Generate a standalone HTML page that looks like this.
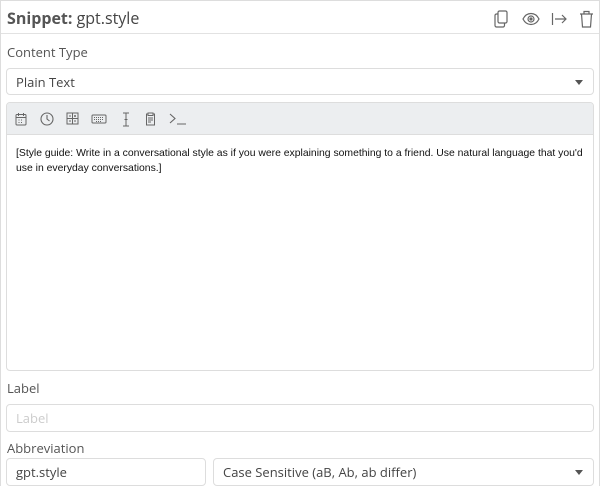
<!DOCTYPE html>
<html><head><style>
*{box-sizing:border-box;margin:0;padding:0}
body{width:600px;height:486px;background:#fff;font-family:"Open Sans","Liberation Sans",sans-serif;color:#444;position:relative;overflow:hidden}
.frame{position:absolute;left:0;top:0;width:600px;height:486px;border:1px solid #ddd;border-bottom:none}
.hdr{position:absolute;left:1px;top:1px;width:598px;height:33px;border-bottom:1px solid #e2e2e2}
.hdr .t{position:absolute;left:6px;top:6px;font-size:16px;color:#444}
.hdr b{font-weight:bold;color:#555}
.lbl{position:absolute;left:7px;font-size:13px;color:#555}
.box{position:absolute;border:1px solid #ddd;border-radius:4px;background:#fff;font-size:13px;color:#444;padding-left:9px;display:flex;align-items:center}
.caret{position:absolute;right:10px;top:50%;margin-top:-2px;border-left:4px solid transparent;border-right:4px solid transparent;border-top:5px solid #555}
.ed{position:absolute;left:6px;top:102px;width:588px;height:269px;border:1px solid #ddd;border-radius:4px;overflow:hidden}
.tb{height:32px;background:#eceef0;border-bottom:1px solid #ddd;position:relative}
.tb svg{position:absolute;top:9px}
.txt{padding:11px 9px;font-family:"Liberation Sans",Arial,sans-serif;font-size:10.4px;line-height:15px;color:#111;white-space:nowrap}
.ic{position:absolute;top:9px}
</style></head><body>
<div class="frame"></div>
<div class="hdr"><div class="t"><b>Snippet:</b> gpt.style</div>
<svg class="ic" style="left:492px" width="16" height="18" viewBox="0 0 16 18" fill="none" stroke="#666" stroke-width="1.2"><rect x="5" y="1" width="9" height="12" rx="1.5"/><path d="M5 4H3.5A1.5 1.5 0 0 0 2 5.5v10A1.5 1.5 0 0 0 3.5 17H10a1.5 1.5 0 0 0 1.5-1.5V13"/></svg>
<svg class="ic" style="left:521px;top:11px" width="18" height="14" viewBox="0 0 18 14" fill="none" stroke="#666" stroke-width="1.2"><path d="M1 7C3 3 6 1.5 9 1.5S15 3 17 7c-2 4-5 5.5-8 5.5S3 11 1 7z"/><circle cx="9" cy="7" r="3"/><circle cx="9" cy="7" r="1" fill="#666"/></svg>
<svg class="ic" style="left:550px;top:11px" width="17" height="14" viewBox="0 0 17 14" fill="none" stroke="#666" stroke-width="1.2"><path d="M1.5 1v12M4 7h11M11 3l4 4-4 4"/></svg>
<svg class="ic" style="left:578px" width="15" height="18" viewBox="0 0 15 18" fill="none" stroke="#666" stroke-width="1.2"><path d="M1 4h13M5 4V1.5h5V4M2.5 4l1 13h8l1-13"/></svg>
</div>
<div class="lbl" style="top:43px">Content Type</div>
<div class="box" style="left:6px;top:68px;width:588px;height:27px">Plain Text<span class="caret"></span></div>
<div class="ed"><div class="tb">
<svg style="left:8px" width="12" height="14" viewBox="0 0 12 14" fill="none" stroke="#666" stroke-width="1"><rect x="1" y="2.5" width="10" height="10.5" rx="1"/><path d="M1 5.5h10M3.5 1v3M8.5 1v3M3.5 8h1M6 8h1M8.5 8h0M3.5 10.5h1M6 10.5h1"/></svg>
<svg style="left:33px" width="14" height="14" viewBox="0 0 14 14" fill="none" stroke="#666" stroke-width="1.1"><circle cx="7" cy="7" r="6"/><path d="M7 3v4l2.5 2"/></svg>
<svg style="left:59px" width="13" height="13" viewBox="0 0 13 13" fill="none" stroke="#666" stroke-width="1"><rect x="1" y="1" width="11" height="11"/><path d="M6.5 1v11M1 6.5h11M3 4h2M8 4h2M9 3v2M3 9h2M8 9h2"/></svg>
<svg style="left:84px;top:11px" width="16" height="10" viewBox="0 0 16 10" fill="none" stroke="#666" stroke-width="1"><rect x="1" y="1" width="14" height="8" rx="1"/><path d="M3 3.5h10M3 5.5h10M5 7.5h6" stroke-dasharray="1 1"/></svg>
<svg style="left:115px" width="8" height="15" viewBox="0 0 8 15" fill="none" stroke="#666" stroke-width="1"><path d="M1 1h6M1 14h6M4 1v13M2.5 7.5h3"/></svg>
<svg style="left:138px" width="11" height="14" viewBox="0 0 11 14" fill="none" stroke="#666" stroke-width="1"><path d="M3 2H1.5v11h8V2H8M3 1h5v2.5H3zM3 6h5M3 8h5M3 10h3"/></svg>
<svg style="left:162px;top:10px" width="18" height="12" viewBox="0 0 18 12" fill="none" stroke="#666" stroke-width="1.1"><path d="M1 1l5 4.5L1 10M8 11h9"/></svg>
</div>
<div class="txt">[Style guide: Write in a conversational style as if you were explaining something to a friend. Use natural language that you'd<br>use in everyday conversations.]</div></div>
<div class="lbl" style="top:379px">Label</div>
<div class="box" style="left:6px;top:404px;width:588px;height:28px;color:#ccc">Label</div>
<div class="lbl" style="top:439px">Abbreviation</div>
<div class="box" style="left:6px;top:458px;width:200px;height:28px">gpt.style</div>
<div class="box" style="left:213px;top:458px;width:381px;height:28px">Case Sensitive (aB, Ab, ab differ)<span class="caret"></span></div>
</body></html>
